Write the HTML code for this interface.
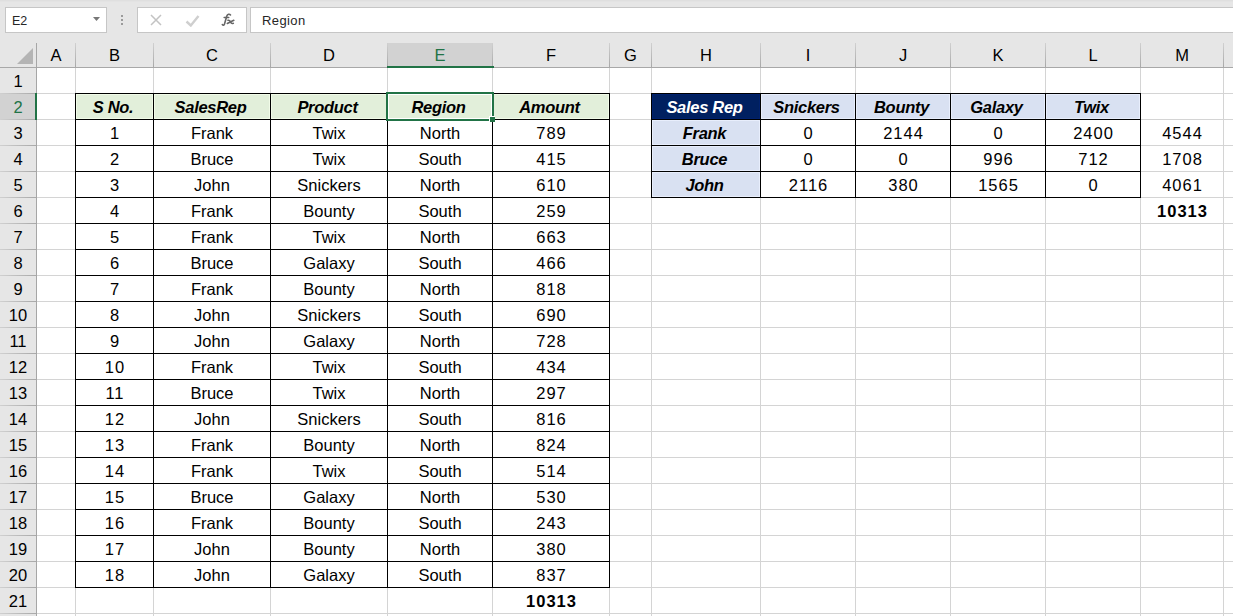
<!DOCTYPE html><html><head><meta charset="utf-8"><style>
*{margin:0;padding:0;box-sizing:border-box}
html,body{width:1233px;height:616px;overflow:hidden;background:#fff}
body{position:relative;font-family:"Liberation Sans",sans-serif;color:#000}
.a{position:absolute}
.t{position:absolute;text-align:center;white-space:nowrap;font-size:16.5px;line-height:26px;height:26px}
.b{font-weight:bold}
.bi{font-weight:bold;font-style:italic;letter-spacing:-0.3px;margin-left:-1.5px}
.n{letter-spacing:1px;text-indent:1px}
.b{letter-spacing:1px;text-indent:1px}
.gv{position:absolute;width:1px;background:#d4d4d4}
.gh{position:absolute;height:1px;background:#d4d4d4}

</style></head><body>
<div class="a" style="left:0;top:0;width:1233px;height:67px;background:#e6e6e6"></div>
<div class="a" style="left:0;top:0;width:1233px;height:1px;background:#dfdfdf"></div>
<div class="a" style="left:0;top:1px;width:1233px;height:1px;background:#e3e3e3"></div>
<div class="a" style="left:5px;top:7px;width:102px;height:26px;border:1px solid #c6c6c6;background:#fff"></div>
<div class="a" style="left:12px;top:8px;height:26px;line-height:26px;font-size:12.5px;color:#262626">E2</div>
<svg class="a" style="left:93px;top:17px" width="7" height="4"><path d="M0 0H7L3.5 4Z" fill="#777"/></svg>
<div class="a" style="left:121px;top:15px;width:2px;height:2px;background:#9a9a9a"></div>
<div class="a" style="left:121px;top:19px;width:2px;height:2px;background:#9a9a9a"></div>
<div class="a" style="left:121px;top:23px;width:2px;height:2px;background:#9a9a9a"></div>
<div class="a" style="left:137px;top:7px;width:110px;height:26px;border:1px solid #c6c6c6;background:#fff"></div>
<svg class="a" style="left:150px;top:14px" width="12" height="12"><path d="M1 1L11 11M11 1L1 11" stroke="#c3c3c3" stroke-width="1.5"/></svg>
<svg class="a" style="left:185px;top:14px" width="15" height="13"><path d="M1.5 7.5L5.8 11.5L13.5 2" stroke="#cfcfcf" stroke-width="2.4" fill="none"/></svg>
<svg class="a" style="left:218px;top:10px" width="20" height="20"><g stroke="#666" stroke-width="1.6" fill="none" stroke-linecap="round"><path d="M12.5 5C11.5 3.8 9.5 4 8.8 6L6.5 14C6 15.5 5 15.5 4.3 14.6"/><path d="M6.2 7.5H10.7"/><path d="M10 10.3Q11.5 10 12.3 11.5L13.2 13Q14 13.8 15.3 13.3"/><path d="M15.8 10.3L9.3 13.5"/></g></svg>
<div class="a" style="left:250px;top:7px;width:990px;height:26px;border:1px solid #c6c6c6;background:#fff"></div>
<div class="a" style="left:262px;top:8px;height:26px;line-height:26px;font-size:13px;letter-spacing:0.4px;color:#262626">Region</div>
<div class="a" style="left:0;top:43px;width:1233px;height:24px;background:#e6e6e6"></div>
<div class="a" style="left:387px;top:43px;width:106px;height:24px;background:#d2d2d2"></div>
<div class="a" style="left:75px;top:43px;width:1px;height:24px;background:linear-gradient(#d0d0d0,#a8a8a8)"></div>
<div class="a" style="left:153px;top:43px;width:1px;height:24px;background:linear-gradient(#d0d0d0,#a8a8a8)"></div>
<div class="a" style="left:270px;top:43px;width:1px;height:24px;background:linear-gradient(#d0d0d0,#a8a8a8)"></div>
<div class="a" style="left:387px;top:43px;width:1px;height:24px;background:linear-gradient(#d0d0d0,#a8a8a8)"></div>
<div class="a" style="left:492px;top:43px;width:1px;height:24px;background:linear-gradient(#d0d0d0,#a8a8a8)"></div>
<div class="a" style="left:609px;top:43px;width:1px;height:24px;background:linear-gradient(#d0d0d0,#a8a8a8)"></div>
<div class="a" style="left:651px;top:43px;width:1px;height:24px;background:linear-gradient(#d0d0d0,#a8a8a8)"></div>
<div class="a" style="left:760px;top:43px;width:1px;height:24px;background:linear-gradient(#d0d0d0,#a8a8a8)"></div>
<div class="a" style="left:855px;top:43px;width:1px;height:24px;background:linear-gradient(#d0d0d0,#a8a8a8)"></div>
<div class="a" style="left:950px;top:43px;width:1px;height:24px;background:linear-gradient(#d0d0d0,#a8a8a8)"></div>
<div class="a" style="left:1045px;top:43px;width:1px;height:24px;background:linear-gradient(#d0d0d0,#a8a8a8)"></div>
<div class="a" style="left:1140px;top:43px;width:1px;height:24px;background:linear-gradient(#d0d0d0,#a8a8a8)"></div>
<div class="a" style="left:1223px;top:43px;width:1px;height:24px;background:linear-gradient(#d0d0d0,#a8a8a8)"></div>
<div class="a" style="left:0;top:67px;width:1233px;height:1px;background:#a8a8a8"></div>
<div class="a" style="left:387px;top:66px;width:107px;height:2px;background:#217346"></div>
<svg class="a" style="left:17px;top:48px" width="16" height="16"><path d="M16 0V16H0Z" fill="#b4b4b4"/></svg>
<div class="t" style="left:36px;width:40px;top:42px;color:#000">A</div>
<div class="t" style="left:75px;width:79px;top:42px;color:#000">B</div>
<div class="t" style="left:153px;width:118px;top:42px;color:#000">C</div>
<div class="t" style="left:270px;width:118px;top:42px;color:#000">D</div>
<div class="t" style="left:387px;width:106px;top:42px;color:#217346">E</div>
<div class="t" style="left:492px;width:118px;top:42px;color:#000">F</div>
<div class="t" style="left:609px;width:43px;top:42px;color:#000">G</div>
<div class="t" style="left:651px;width:110px;top:42px;color:#000">H</div>
<div class="t" style="left:760px;width:96px;top:42px;color:#000">I</div>
<div class="t" style="left:855px;width:96px;top:42px;color:#000">J</div>
<div class="t" style="left:950px;width:96px;top:42px;color:#000">K</div>
<div class="t" style="left:1045px;width:96px;top:42px;color:#000">L</div>
<div class="t" style="left:1140px;width:84px;top:42px;color:#000">M</div>
<div class="a" style="left:0;top:68px;width:36px;height:548px;background:#e6e6e6"></div>
<div class="a" style="left:0;top:93px;width:35px;height:26px;background:#d2d2d2"></div>
<div class="a" style="left:0;top:93px;width:36px;height:1px;background:linear-gradient(to right,#d0d0d0,#a8a8a8)"></div>
<div class="a" style="left:0;top:119px;width:36px;height:1px;background:linear-gradient(to right,#d0d0d0,#a8a8a8)"></div>
<div class="a" style="left:0;top:145px;width:36px;height:1px;background:linear-gradient(to right,#d0d0d0,#a8a8a8)"></div>
<div class="a" style="left:0;top:171px;width:36px;height:1px;background:linear-gradient(to right,#d0d0d0,#a8a8a8)"></div>
<div class="a" style="left:0;top:197px;width:36px;height:1px;background:linear-gradient(to right,#d0d0d0,#a8a8a8)"></div>
<div class="a" style="left:0;top:223px;width:36px;height:1px;background:linear-gradient(to right,#d0d0d0,#a8a8a8)"></div>
<div class="a" style="left:0;top:249px;width:36px;height:1px;background:linear-gradient(to right,#d0d0d0,#a8a8a8)"></div>
<div class="a" style="left:0;top:275px;width:36px;height:1px;background:linear-gradient(to right,#d0d0d0,#a8a8a8)"></div>
<div class="a" style="left:0;top:301px;width:36px;height:1px;background:linear-gradient(to right,#d0d0d0,#a8a8a8)"></div>
<div class="a" style="left:0;top:327px;width:36px;height:1px;background:linear-gradient(to right,#d0d0d0,#a8a8a8)"></div>
<div class="a" style="left:0;top:353px;width:36px;height:1px;background:linear-gradient(to right,#d0d0d0,#a8a8a8)"></div>
<div class="a" style="left:0;top:379px;width:36px;height:1px;background:linear-gradient(to right,#d0d0d0,#a8a8a8)"></div>
<div class="a" style="left:0;top:405px;width:36px;height:1px;background:linear-gradient(to right,#d0d0d0,#a8a8a8)"></div>
<div class="a" style="left:0;top:431px;width:36px;height:1px;background:linear-gradient(to right,#d0d0d0,#a8a8a8)"></div>
<div class="a" style="left:0;top:457px;width:36px;height:1px;background:linear-gradient(to right,#d0d0d0,#a8a8a8)"></div>
<div class="a" style="left:0;top:483px;width:36px;height:1px;background:linear-gradient(to right,#d0d0d0,#a8a8a8)"></div>
<div class="a" style="left:0;top:509px;width:36px;height:1px;background:linear-gradient(to right,#d0d0d0,#a8a8a8)"></div>
<div class="a" style="left:0;top:535px;width:36px;height:1px;background:linear-gradient(to right,#d0d0d0,#a8a8a8)"></div>
<div class="a" style="left:0;top:561px;width:36px;height:1px;background:linear-gradient(to right,#d0d0d0,#a8a8a8)"></div>
<div class="a" style="left:0;top:587px;width:36px;height:1px;background:linear-gradient(to right,#d0d0d0,#a8a8a8)"></div>
<div class="a" style="left:0;top:613px;width:36px;height:1px;background:linear-gradient(to right,#d0d0d0,#a8a8a8)"></div>
<div class="a" style="left:0;top:639px;width:36px;height:1px;background:linear-gradient(to right,#d0d0d0,#a8a8a8)"></div>
<div class="a" style="left:36px;top:43px;width:1px;height:573px;background:#a6a6a6"></div>
<div class="a" style="left:35px;top:93px;width:2px;height:27px;background:#217346"></div>
<div class="t" style="left:0;width:36px;top:68px;color:#000">1</div>
<div class="t" style="left:0;width:36px;top:94px;color:#217346">2</div>
<div class="t" style="left:0;width:36px;top:120px;color:#000">3</div>
<div class="t" style="left:0;width:36px;top:146px;color:#000">4</div>
<div class="t" style="left:0;width:36px;top:172px;color:#000">5</div>
<div class="t" style="left:0;width:36px;top:198px;color:#000">6</div>
<div class="t" style="left:0;width:36px;top:224px;color:#000">7</div>
<div class="t" style="left:0;width:36px;top:250px;color:#000">8</div>
<div class="t" style="left:0;width:36px;top:276px;color:#000">9</div>
<div class="t" style="left:0;width:36px;top:302px;color:#000">10</div>
<div class="t" style="left:0;width:36px;top:328px;color:#000">11</div>
<div class="t" style="left:0;width:36px;top:354px;color:#000">12</div>
<div class="t" style="left:0;width:36px;top:380px;color:#000">13</div>
<div class="t" style="left:0;width:36px;top:406px;color:#000">14</div>
<div class="t" style="left:0;width:36px;top:432px;color:#000">15</div>
<div class="t" style="left:0;width:36px;top:458px;color:#000">16</div>
<div class="t" style="left:0;width:36px;top:484px;color:#000">17</div>
<div class="t" style="left:0;width:36px;top:510px;color:#000">18</div>
<div class="t" style="left:0;width:36px;top:536px;color:#000">19</div>
<div class="t" style="left:0;width:36px;top:562px;color:#000">20</div>
<div class="t" style="left:0;width:36px;top:588px;color:#000">21</div>
<div class="t" style="left:0;width:36px;top:614px;color:#000">22</div>
<div class="gv" style="left:75px;top:68px;height:548px"></div>
<div class="gv" style="left:153px;top:68px;height:548px"></div>
<div class="gv" style="left:270px;top:68px;height:548px"></div>
<div class="gv" style="left:387px;top:68px;height:548px"></div>
<div class="gv" style="left:492px;top:68px;height:548px"></div>
<div class="gv" style="left:609px;top:68px;height:548px"></div>
<div class="gv" style="left:651px;top:68px;height:548px"></div>
<div class="gv" style="left:760px;top:68px;height:548px"></div>
<div class="gv" style="left:855px;top:68px;height:548px"></div>
<div class="gv" style="left:950px;top:68px;height:548px"></div>
<div class="gv" style="left:1045px;top:68px;height:548px"></div>
<div class="gv" style="left:1140px;top:68px;height:548px"></div>
<div class="gv" style="left:1223px;top:68px;height:548px"></div>
<div class="gh" style="left:37px;top:93px;width:1196px"></div>
<div class="gh" style="left:37px;top:119px;width:1196px"></div>
<div class="gh" style="left:37px;top:145px;width:1196px"></div>
<div class="gh" style="left:37px;top:171px;width:1196px"></div>
<div class="gh" style="left:37px;top:197px;width:1196px"></div>
<div class="gh" style="left:37px;top:223px;width:1196px"></div>
<div class="gh" style="left:37px;top:249px;width:1196px"></div>
<div class="gh" style="left:37px;top:275px;width:1196px"></div>
<div class="gh" style="left:37px;top:301px;width:1196px"></div>
<div class="gh" style="left:37px;top:327px;width:1196px"></div>
<div class="gh" style="left:37px;top:353px;width:1196px"></div>
<div class="gh" style="left:37px;top:379px;width:1196px"></div>
<div class="gh" style="left:37px;top:405px;width:1196px"></div>
<div class="gh" style="left:37px;top:431px;width:1196px"></div>
<div class="gh" style="left:37px;top:457px;width:1196px"></div>
<div class="gh" style="left:37px;top:483px;width:1196px"></div>
<div class="gh" style="left:37px;top:509px;width:1196px"></div>
<div class="gh" style="left:37px;top:535px;width:1196px"></div>
<div class="gh" style="left:37px;top:561px;width:1196px"></div>
<div class="gh" style="left:37px;top:587px;width:1196px"></div>
<div class="gh" style="left:37px;top:613px;width:1196px"></div>
<div class="gh" style="left:37px;top:639px;width:1196px"></div>
<div class="a" style="left:76px;top:94px;width:77px;height:25px;background:#e2efda;border:1px solid #f1fbe8"></div>
<div class="a" style="left:154px;top:94px;width:116px;height:25px;background:#e2efda;border:1px solid #f1fbe8"></div>
<div class="a" style="left:271px;top:94px;width:116px;height:25px;background:#e2efda;border:1px solid #f1fbe8"></div>
<div class="a" style="left:388px;top:94px;width:104px;height:25px;background:#e2efda;border:1px solid #f1fbe8"></div>
<div class="a" style="left:493px;top:94px;width:116px;height:25px;background:#e2efda;border:1px solid #f1fbe8"></div>
<div class="a" style="left:652px;top:94px;width:108px;height:25px;background:#002060;border:1px solid #00216e"></div>
<div class="a" style="left:761px;top:94px;width:94px;height:25px;background:#d9e1f2;border:1px solid #e8eefc"></div>
<div class="a" style="left:856px;top:94px;width:94px;height:25px;background:#d9e1f2;border:1px solid #e8eefc"></div>
<div class="a" style="left:951px;top:94px;width:94px;height:25px;background:#d9e1f2;border:1px solid #e8eefc"></div>
<div class="a" style="left:1046px;top:94px;width:94px;height:25px;background:#d9e1f2;border:1px solid #e8eefc"></div>
<div class="a" style="left:652px;top:120px;width:108px;height:25px;background:#d9e1f2;border:1px solid #e8eefc"></div>
<div class="a" style="left:652px;top:146px;width:108px;height:25px;background:#d9e1f2;border:1px solid #e8eefc"></div>
<div class="a" style="left:652px;top:172px;width:108px;height:25px;background:#d9e1f2;border:1px solid #e8eefc"></div>
<div class="a" style="left:651px;top:197px;width:490px;height:1px;background:#000"></div>
<div class="a" style="left:651px;top:171px;width:490px;height:1px;background:#000"></div>
<div class="a" style="left:651px;top:145px;width:490px;height:1px;background:#000"></div>
<div class="a" style="left:651px;top:119px;width:490px;height:1px;background:#000"></div>
<div class="a" style="left:651px;top:93px;width:490px;height:1px;background:#000"></div>
<div class="a" style="left:1140px;top:93px;width:1px;height:105px;background:#000"></div>
<div class="a" style="left:1045px;top:93px;width:1px;height:105px;background:#000"></div>
<div class="a" style="left:950px;top:93px;width:1px;height:105px;background:#000"></div>
<div class="a" style="left:855px;top:93px;width:1px;height:105px;background:#000"></div>
<div class="a" style="left:760px;top:93px;width:1px;height:105px;background:#000"></div>
<div class="a" style="left:651px;top:93px;width:1px;height:105px;background:#000"></div>
<div class="a" style="left:75px;top:587px;width:535px;height:1px;background:#000"></div>
<div class="a" style="left:75px;top:561px;width:535px;height:1px;background:#000"></div>
<div class="a" style="left:75px;top:535px;width:535px;height:1px;background:#000"></div>
<div class="a" style="left:75px;top:509px;width:535px;height:1px;background:#000"></div>
<div class="a" style="left:75px;top:483px;width:535px;height:1px;background:#000"></div>
<div class="a" style="left:75px;top:457px;width:535px;height:1px;background:#000"></div>
<div class="a" style="left:75px;top:431px;width:535px;height:1px;background:#000"></div>
<div class="a" style="left:75px;top:405px;width:535px;height:1px;background:#000"></div>
<div class="a" style="left:75px;top:379px;width:535px;height:1px;background:#000"></div>
<div class="a" style="left:75px;top:353px;width:535px;height:1px;background:#000"></div>
<div class="a" style="left:75px;top:327px;width:535px;height:1px;background:#000"></div>
<div class="a" style="left:75px;top:301px;width:535px;height:1px;background:#000"></div>
<div class="a" style="left:75px;top:275px;width:535px;height:1px;background:#000"></div>
<div class="a" style="left:75px;top:249px;width:535px;height:1px;background:#000"></div>
<div class="a" style="left:75px;top:223px;width:535px;height:1px;background:#000"></div>
<div class="a" style="left:75px;top:197px;width:535px;height:1px;background:#000"></div>
<div class="a" style="left:75px;top:171px;width:535px;height:1px;background:#000"></div>
<div class="a" style="left:75px;top:145px;width:535px;height:1px;background:#000"></div>
<div class="a" style="left:75px;top:119px;width:535px;height:1px;background:#000"></div>
<div class="a" style="left:75px;top:93px;width:535px;height:1px;background:#000"></div>
<div class="a" style="left:609px;top:93px;width:1px;height:495px;background:#000"></div>
<div class="a" style="left:492px;top:93px;width:1px;height:495px;background:#000"></div>
<div class="a" style="left:387px;top:93px;width:1px;height:495px;background:#000"></div>
<div class="a" style="left:270px;top:93px;width:1px;height:495px;background:#000"></div>
<div class="a" style="left:153px;top:93px;width:1px;height:495px;background:#000"></div>
<div class="a" style="left:75px;top:93px;width:1px;height:495px;background:#000"></div>
<div class="t bi" style="left:75px;width:79px;top:94px">S No.</div>
<div class="t bi" style="left:153px;width:118px;top:94px">SalesRep</div>
<div class="t bi" style="left:270px;width:118px;top:94px">Product</div>
<div class="t bi" style="left:387px;width:106px;top:94px">Region</div>
<div class="t bi" style="left:492px;width:118px;top:94px">Amount</div>
<div class="t n" style="left:75px;width:79px;top:120px">1</div>
<div class="t " style="left:153px;width:118px;top:120px">Frank</div>
<div class="t " style="left:270px;width:118px;top:120px">Twix</div>
<div class="t " style="left:387px;width:106px;top:120px">North</div>
<div class="t n" style="left:492px;width:118px;top:120px">789</div>
<div class="t n" style="left:75px;width:79px;top:146px">2</div>
<div class="t " style="left:153px;width:118px;top:146px">Bruce</div>
<div class="t " style="left:270px;width:118px;top:146px">Twix</div>
<div class="t " style="left:387px;width:106px;top:146px">South</div>
<div class="t n" style="left:492px;width:118px;top:146px">415</div>
<div class="t n" style="left:75px;width:79px;top:172px">3</div>
<div class="t " style="left:153px;width:118px;top:172px">John</div>
<div class="t " style="left:270px;width:118px;top:172px">Snickers</div>
<div class="t " style="left:387px;width:106px;top:172px">North</div>
<div class="t n" style="left:492px;width:118px;top:172px">610</div>
<div class="t n" style="left:75px;width:79px;top:198px">4</div>
<div class="t " style="left:153px;width:118px;top:198px">Frank</div>
<div class="t " style="left:270px;width:118px;top:198px">Bounty</div>
<div class="t " style="left:387px;width:106px;top:198px">South</div>
<div class="t n" style="left:492px;width:118px;top:198px">259</div>
<div class="t n" style="left:75px;width:79px;top:224px">5</div>
<div class="t " style="left:153px;width:118px;top:224px">Frank</div>
<div class="t " style="left:270px;width:118px;top:224px">Twix</div>
<div class="t " style="left:387px;width:106px;top:224px">North</div>
<div class="t n" style="left:492px;width:118px;top:224px">663</div>
<div class="t n" style="left:75px;width:79px;top:250px">6</div>
<div class="t " style="left:153px;width:118px;top:250px">Bruce</div>
<div class="t " style="left:270px;width:118px;top:250px">Galaxy</div>
<div class="t " style="left:387px;width:106px;top:250px">South</div>
<div class="t n" style="left:492px;width:118px;top:250px">466</div>
<div class="t n" style="left:75px;width:79px;top:276px">7</div>
<div class="t " style="left:153px;width:118px;top:276px">Frank</div>
<div class="t " style="left:270px;width:118px;top:276px">Bounty</div>
<div class="t " style="left:387px;width:106px;top:276px">North</div>
<div class="t n" style="left:492px;width:118px;top:276px">818</div>
<div class="t n" style="left:75px;width:79px;top:302px">8</div>
<div class="t " style="left:153px;width:118px;top:302px">John</div>
<div class="t " style="left:270px;width:118px;top:302px">Snickers</div>
<div class="t " style="left:387px;width:106px;top:302px">South</div>
<div class="t n" style="left:492px;width:118px;top:302px">690</div>
<div class="t n" style="left:75px;width:79px;top:328px">9</div>
<div class="t " style="left:153px;width:118px;top:328px">John</div>
<div class="t " style="left:270px;width:118px;top:328px">Galaxy</div>
<div class="t " style="left:387px;width:106px;top:328px">North</div>
<div class="t n" style="left:492px;width:118px;top:328px">728</div>
<div class="t n" style="left:75px;width:79px;top:354px">10</div>
<div class="t " style="left:153px;width:118px;top:354px">Frank</div>
<div class="t " style="left:270px;width:118px;top:354px">Twix</div>
<div class="t " style="left:387px;width:106px;top:354px">South</div>
<div class="t n" style="left:492px;width:118px;top:354px">434</div>
<div class="t n" style="left:75px;width:79px;top:380px">11</div>
<div class="t " style="left:153px;width:118px;top:380px">Bruce</div>
<div class="t " style="left:270px;width:118px;top:380px">Twix</div>
<div class="t " style="left:387px;width:106px;top:380px">North</div>
<div class="t n" style="left:492px;width:118px;top:380px">297</div>
<div class="t n" style="left:75px;width:79px;top:406px">12</div>
<div class="t " style="left:153px;width:118px;top:406px">John</div>
<div class="t " style="left:270px;width:118px;top:406px">Snickers</div>
<div class="t " style="left:387px;width:106px;top:406px">South</div>
<div class="t n" style="left:492px;width:118px;top:406px">816</div>
<div class="t n" style="left:75px;width:79px;top:432px">13</div>
<div class="t " style="left:153px;width:118px;top:432px">Frank</div>
<div class="t " style="left:270px;width:118px;top:432px">Bounty</div>
<div class="t " style="left:387px;width:106px;top:432px">North</div>
<div class="t n" style="left:492px;width:118px;top:432px">824</div>
<div class="t n" style="left:75px;width:79px;top:458px">14</div>
<div class="t " style="left:153px;width:118px;top:458px">Frank</div>
<div class="t " style="left:270px;width:118px;top:458px">Twix</div>
<div class="t " style="left:387px;width:106px;top:458px">South</div>
<div class="t n" style="left:492px;width:118px;top:458px">514</div>
<div class="t n" style="left:75px;width:79px;top:484px">15</div>
<div class="t " style="left:153px;width:118px;top:484px">Bruce</div>
<div class="t " style="left:270px;width:118px;top:484px">Galaxy</div>
<div class="t " style="left:387px;width:106px;top:484px">North</div>
<div class="t n" style="left:492px;width:118px;top:484px">530</div>
<div class="t n" style="left:75px;width:79px;top:510px">16</div>
<div class="t " style="left:153px;width:118px;top:510px">Frank</div>
<div class="t " style="left:270px;width:118px;top:510px">Bounty</div>
<div class="t " style="left:387px;width:106px;top:510px">South</div>
<div class="t n" style="left:492px;width:118px;top:510px">243</div>
<div class="t n" style="left:75px;width:79px;top:536px">17</div>
<div class="t " style="left:153px;width:118px;top:536px">John</div>
<div class="t " style="left:270px;width:118px;top:536px">Bounty</div>
<div class="t " style="left:387px;width:106px;top:536px">North</div>
<div class="t n" style="left:492px;width:118px;top:536px">380</div>
<div class="t n" style="left:75px;width:79px;top:562px">18</div>
<div class="t " style="left:153px;width:118px;top:562px">John</div>
<div class="t " style="left:270px;width:118px;top:562px">Galaxy</div>
<div class="t " style="left:387px;width:106px;top:562px">South</div>
<div class="t n" style="left:492px;width:118px;top:562px">837</div>
<div class="t b" style="left:492px;width:118px;top:588px">10313</div>
<div class="t bi" style="left:651px;width:110px;top:94px;color:#fff">Sales Rep</div>
<div class="t bi" style="left:760px;width:96px;top:94px">Snickers</div>
<div class="t bi" style="left:855px;width:96px;top:94px">Bounty</div>
<div class="t bi" style="left:950px;width:96px;top:94px">Galaxy</div>
<div class="t bi" style="left:1045px;width:96px;top:94px">Twix</div>
<div class="t bi" style="left:651px;width:110px;top:120px">Frank</div>
<div class="t n" style="left:760px;width:96px;top:120px">0</div>
<div class="t n" style="left:855px;width:96px;top:120px">2144</div>
<div class="t n" style="left:950px;width:96px;top:120px">0</div>
<div class="t n" style="left:1045px;width:96px;top:120px">2400</div>
<div class="t n" style="left:1140px;width:84px;top:120px">4544</div>
<div class="t bi" style="left:651px;width:110px;top:146px">Bruce</div>
<div class="t n" style="left:760px;width:96px;top:146px">0</div>
<div class="t n" style="left:855px;width:96px;top:146px">0</div>
<div class="t n" style="left:950px;width:96px;top:146px">996</div>
<div class="t n" style="left:1045px;width:96px;top:146px">712</div>
<div class="t n" style="left:1140px;width:84px;top:146px">1708</div>
<div class="t bi" style="left:651px;width:110px;top:172px">John</div>
<div class="t n" style="left:760px;width:96px;top:172px">2116</div>
<div class="t n" style="left:855px;width:96px;top:172px">380</div>
<div class="t n" style="left:950px;width:96px;top:172px">1565</div>
<div class="t n" style="left:1045px;width:96px;top:172px">0</div>
<div class="t n" style="left:1140px;width:84px;top:172px">4061</div>
<div class="t b" style="left:1140px;width:84px;top:198px">10313</div>
<div class="a" style="left:386px;top:92px;width:108px;height:29px;border:2px solid #217346"></div>
<div class="a" style="left:388px;top:94px;width:104px;height:25px;border:1px solid #fff"></div>
<div class="a" style="left:489px;top:116px;width:6px;height:6px;background:#fff"></div>
<div class="a" style="left:490px;top:117px;width:5px;height:5px;background:#217346"></div>
</body></html>
